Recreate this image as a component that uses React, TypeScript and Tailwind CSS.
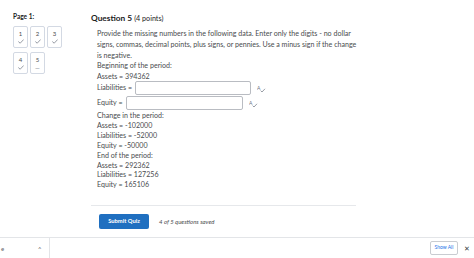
import React from "react";

const tiles = [
  { n: "1", done: true },
  { n: "2", done: true },
  { n: "3", done: true },
  { n: "4", done: true },
  { n: "5", done: false },
];

const Check = () => (
  <svg width="6" height="5" viewBox="0 0 6 5" fill="none">
    <path d="M0.6 2.8 L2.2 4.2 L5.4 0.8" stroke="#6b7280" strokeWidth="0.7" strokeLinecap="round" />
  </svg>
);

const SpellIcon = () => (
  <svg width="9" height="8" viewBox="0 0 9 8" fill="none">
    <text x="0" y="5" fontSize="5" fill="#6b7280" fontFamily="Lato, sans-serif">A</text>
    <path d="M3.6 5.6 L5 7 L8 3.8" stroke="#6b7280" strokeWidth="0.7" />
  </svg>
);

const Field = ({ label, width }: { label: string; width: string }) => (
  <div className="flex items-center h-[14px]">
    <span>{label}</span>
    <div className={`ml-[3px] h-[14px] ${width} rounded-[2px] border border-[#b9bcc2] bg-white`} />
    <span className="ml-[6px] mt-[2px]">
      <SpellIcon />
    </span>
  </div>
);

export default function App() {
  return (
    <div
      className="relative w-[474px] h-[258px] bg-white text-[#494c4e] overflow-hidden"
      style={{ fontFamily: "Lato, 'Noto Sans', sans-serif" }}
    >
      <div className="flex">
        {/* left navigator */}
        <div className="w-[91px] pl-[13px] pt-[13px] shrink-0">
          <div className="text-[6.5px] font-bold text-[#202122] leading-[8px]">Page 1:</div>
          <div className="mt-[5px] grid grid-cols-[15px_15px_15px] gap-x-[2px] gap-y-[4px]">
            {tiles.map((t) => (
              <div
                key={t.n}
                className="h-[22px] rounded-[2px] border border-[#d3d9e3] flex flex-col items-center pt-[3px] gap-[2px]"
              >
                <span className="text-[6px] leading-[7px] text-[#494c4e]">{t.n}</span>
                {t.done ? <Check /> : <span className="text-[6px] leading-[5px] text-[#6b7280]">—</span>}
              </div>
            ))}
          </div>
        </div>

        {/* question */}
        <div className="pt-[13px] w-[290px]">
          <div className="text-[8.3px] leading-[10px] text-[#202122]">
            <span className="font-bold">Question 5</span> <span className="text-[7.2px]">(4 points)</span>
          </div>
          <div className="mt-[5px] pl-[6px] w-[268px] text-[7.1px]">
            <div className="leading-[10.8px]">
              <div>
                Provide the missing numbers in the following data. Enter only the digits - no dollar signs, commas,
                decimal points, plus signs, or pennies. Use a minus sign if the change is negative.
              </div>
              <div>Beginning of the period:</div>
              <div>Assets = 394362</div>
            </div>
            <div className="-mt-[2px]">
              <Field label="Liabilities =" width="w-[116px]" />
            </div>
            <div className="mt-[1px]">
              <Field label="Equity =" width="w-[117px]" />
            </div>
            <div className="leading-[9.9px] mt-[1px]">
              <div>Change in the period:</div>
              <div>Assets = -102000</div>
              <div>Liabilities = -52000</div>
              <div>Equity = -50000</div>
              <div>End of the period:</div>
              <div>Assets = 292362</div>
              <div>Liabilities = 127256</div>
              <div>Equity = 165106</div>
            </div>
          </div>
          <div className="mt-[15px] w-[265px] border-t border-[#e6e8eb]" />
          <div className="flex items-center pl-[8px] mt-[8px]">
            <div className="h-[15px] w-[50px] rounded-[2px] bg-[#1f6fc0] text-white text-[5.8px] font-bold flex items-center justify-center">
              Submit Quiz
            </div>
            <span className="ml-[10px] text-[6px] italic text-[#494c4e]">4 of 5 questions saved</span>
          </div>
        </div>
      </div>

      {/* download bar */}
      <div className="absolute left-0 bottom-0 w-full h-[21px] border-t border-[#e3e5e8] bg-white flex items-center">
        <span className="text-[6px] text-[#5f6368] pl-[1px] w-[38px]">e</span>
        <span className="text-[6px] text-[#5f6368] w-[11px]">^</span>
        <div className="h-full border-l border-[#e3e5e8]" />
        <div className="flex-1" />
        <div className="h-[14px] w-[28px] border border-[#c9ccd1] rounded-[2px] flex items-center justify-center text-[5px] text-[#1a73e8]">
          Show All
        </div>
        <span className="ml-[6px] mr-[4px] text-[7px] text-[#3c4043]">✕</span>
      </div>
    </div>
  );
}
